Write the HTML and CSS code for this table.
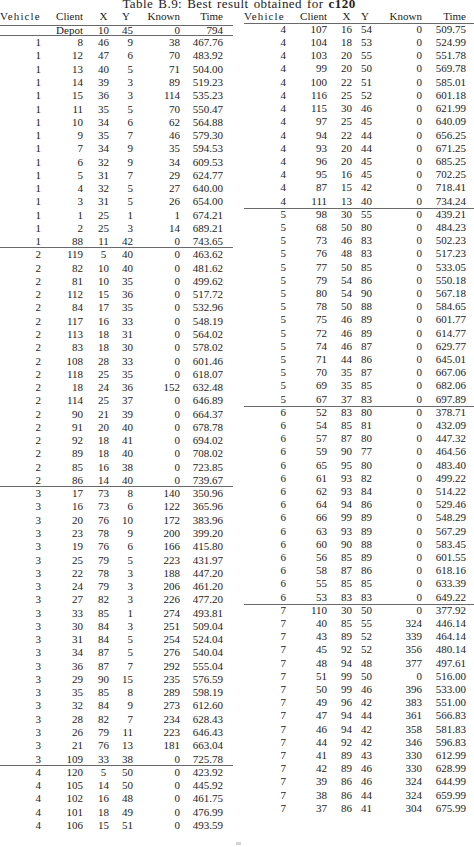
FILE: index.html
```html
<!DOCTYPE html>
<html lang="en">
<head>
<meta charset="utf-8">
<title>Table B.9</title>
<link rel="stylesheet" href="styles.css">
</head>
<body>
<div class="page">
  <div class="caption">Table B.9: Best result obtained for <b>c120</b></div>
  <div class="tables">
    <div class="tbl tbl-l">
      <div class="hd"><span class="hv">Vehicle</span><span>Client</span><span>X</span><span class="hy">Y</span><span>Known</span><span>Time</span></div>
      <div class="r depot"><span></span><span>Depot</span><span>10</span><span>45</span><span>0</span><span>794</span></div>
      <div class="r"><span>1</span><span>8</span><span>46</span><span>9</span><span>38</span><span>467.76</span></div>
      <div class="r"><span>1</span><span>12</span><span>47</span><span>6</span><span>70</span><span>483.92</span></div>
      <div class="r"><span>1</span><span>13</span><span>40</span><span>5</span><span>71</span><span>504.00</span></div>
      <div class="r"><span>1</span><span>14</span><span>39</span><span>3</span><span>89</span><span>519.23</span></div>
      <div class="r"><span>1</span><span>15</span><span>36</span><span>3</span><span>114</span><span>535.23</span></div>
      <div class="r"><span>1</span><span>11</span><span>35</span><span>5</span><span>70</span><span>550.47</span></div>
      <div class="r"><span>1</span><span>10</span><span>34</span><span>6</span><span>62</span><span>564.88</span></div>
      <div class="r"><span>1</span><span>9</span><span>35</span><span>7</span><span>46</span><span>579.30</span></div>
      <div class="r"><span>1</span><span>7</span><span>34</span><span>9</span><span>35</span><span>594.53</span></div>
      <div class="r"><span>1</span><span>6</span><span>32</span><span>9</span><span>34</span><span>609.53</span></div>
      <div class="r"><span>1</span><span>5</span><span>31</span><span>7</span><span>29</span><span>624.77</span></div>
      <div class="r"><span>1</span><span>4</span><span>32</span><span>5</span><span>27</span><span>640.00</span></div>
      <div class="r"><span>1</span><span>3</span><span>31</span><span>5</span><span>26</span><span>654.00</span></div>
      <div class="r"><span>1</span><span>1</span><span>25</span><span>1</span><span>1</span><span>674.21</span></div>
      <div class="r"><span>1</span><span>2</span><span>25</span><span>3</span><span>14</span><span>689.21</span></div>
      <div class="r sep"><span>1</span><span>88</span><span>11</span><span>42</span><span>0</span><span>743.65</span></div>
      <div class="r"><span>2</span><span>119</span><span>5</span><span>40</span><span>0</span><span>463.62</span></div>
      <div class="r"><span>2</span><span>82</span><span>10</span><span>40</span><span>0</span><span>481.62</span></div>
      <div class="r"><span>2</span><span>81</span><span>10</span><span>35</span><span>0</span><span>499.62</span></div>
      <div class="r"><span>2</span><span>112</span><span>15</span><span>36</span><span>0</span><span>517.72</span></div>
      <div class="r"><span>2</span><span>84</span><span>17</span><span>35</span><span>0</span><span>532.96</span></div>
      <div class="r"><span>2</span><span>117</span><span>16</span><span>33</span><span>0</span><span>548.19</span></div>
      <div class="r"><span>2</span><span>113</span><span>18</span><span>31</span><span>0</span><span>564.02</span></div>
      <div class="r"><span>2</span><span>83</span><span>18</span><span>30</span><span>0</span><span>578.02</span></div>
      <div class="r"><span>2</span><span>108</span><span>28</span><span>33</span><span>0</span><span>601.46</span></div>
      <div class="r"><span>2</span><span>118</span><span>25</span><span>35</span><span>0</span><span>618.07</span></div>
      <div class="r"><span>2</span><span>18</span><span>24</span><span>36</span><span>152</span><span>632.48</span></div>
      <div class="r"><span>2</span><span>114</span><span>25</span><span>37</span><span>0</span><span>646.89</span></div>
      <div class="r"><span>2</span><span>90</span><span>21</span><span>39</span><span>0</span><span>664.37</span></div>
      <div class="r"><span>2</span><span>91</span><span>20</span><span>40</span><span>0</span><span>678.78</span></div>
      <div class="r"><span>2</span><span>92</span><span>18</span><span>41</span><span>0</span><span>694.02</span></div>
      <div class="r"><span>2</span><span>89</span><span>18</span><span>40</span><span>0</span><span>708.02</span></div>
      <div class="r"><span>2</span><span>85</span><span>16</span><span>38</span><span>0</span><span>723.85</span></div>
      <div class="r sep"><span>2</span><span>86</span><span>14</span><span>40</span><span>0</span><span>739.67</span></div>
      <div class="r"><span>3</span><span>17</span><span>73</span><span>8</span><span>140</span><span>350.96</span></div>
      <div class="r"><span>3</span><span>16</span><span>73</span><span>6</span><span>122</span><span>365.96</span></div>
      <div class="r"><span>3</span><span>20</span><span>76</span><span>10</span><span>172</span><span>383.96</span></div>
      <div class="r"><span>3</span><span>23</span><span>78</span><span>9</span><span>200</span><span>399.20</span></div>
      <div class="r"><span>3</span><span>19</span><span>76</span><span>6</span><span>166</span><span>415.80</span></div>
      <div class="r"><span>3</span><span>25</span><span>79</span><span>5</span><span>223</span><span>431.97</span></div>
      <div class="r"><span>3</span><span>22</span><span>78</span><span>3</span><span>188</span><span>447.20</span></div>
      <div class="r"><span>3</span><span>24</span><span>79</span><span>3</span><span>206</span><span>461.20</span></div>
      <div class="r"><span>3</span><span>27</span><span>82</span><span>3</span><span>226</span><span>477.20</span></div>
      <div class="r"><span>3</span><span>33</span><span>85</span><span>1</span><span>274</span><span>493.81</span></div>
      <div class="r"><span>3</span><span>30</span><span>84</span><span>3</span><span>251</span><span>509.04</span></div>
      <div class="r"><span>3</span><span>31</span><span>84</span><span>5</span><span>254</span><span>524.04</span></div>
      <div class="r"><span>3</span><span>34</span><span>87</span><span>5</span><span>276</span><span>540.04</span></div>
      <div class="r"><span>3</span><span>36</span><span>87</span><span>7</span><span>292</span><span>555.04</span></div>
      <div class="r"><span>3</span><span>29</span><span>90</span><span>15</span><span>235</span><span>576.59</span></div>
      <div class="r"><span>3</span><span>35</span><span>85</span><span>8</span><span>289</span><span>598.19</span></div>
      <div class="r"><span>3</span><span>32</span><span>84</span><span>9</span><span>273</span><span>612.60</span></div>
      <div class="r"><span>3</span><span>28</span><span>82</span><span>7</span><span>234</span><span>628.43</span></div>
      <div class="r"><span>3</span><span>26</span><span>79</span><span>11</span><span>223</span><span>646.43</span></div>
      <div class="r"><span>3</span><span>21</span><span>76</span><span>13</span><span>181</span><span>663.04</span></div>
      <div class="r sep"><span>3</span><span>109</span><span>33</span><span>38</span><span>0</span><span>725.78</span></div>
      <div class="r"><span>4</span><span>120</span><span>5</span><span>50</span><span>0</span><span>423.92</span></div>
      <div class="r"><span>4</span><span>105</span><span>14</span><span>50</span><span>0</span><span>445.92</span></div>
      <div class="r"><span>4</span><span>102</span><span>16</span><span>48</span><span>0</span><span>461.75</span></div>
      <div class="r"><span>4</span><span>101</span><span>18</span><span>49</span><span>0</span><span>476.99</span></div>
      <div class="r"><span>4</span><span>106</span><span>15</span><span>51</span><span>0</span><span>493.59</span></div>
    </div>
    <div class="tbl tbl-r">
      <div class="hd"><span class="hv">Vehicle</span><span>Client</span><span>X</span><span class="hy">Y</span><span>Known</span><span>Time</span></div>
      <div class="r"><span>4</span><span>107</span><span>16</span><span>54</span><span>0</span><span>509.75</span></div>
      <div class="r"><span>4</span><span>104</span><span>18</span><span>53</span><span>0</span><span>524.99</span></div>
      <div class="r"><span>4</span><span>103</span><span>20</span><span>55</span><span>0</span><span>551.78</span></div>
      <div class="r"><span>4</span><span>99</span><span>20</span><span>50</span><span>0</span><span>569.78</span></div>
      <div class="r"><span>4</span><span>100</span><span>22</span><span>51</span><span>0</span><span>585.01</span></div>
      <div class="r"><span>4</span><span>116</span><span>25</span><span>52</span><span>0</span><span>601.18</span></div>
      <div class="r"><span>4</span><span>115</span><span>30</span><span>46</span><span>0</span><span>621.99</span></div>
      <div class="r"><span>4</span><span>97</span><span>25</span><span>45</span><span>0</span><span>640.09</span></div>
      <div class="r"><span>4</span><span>94</span><span>22</span><span>44</span><span>0</span><span>656.25</span></div>
      <div class="r"><span>4</span><span>93</span><span>20</span><span>44</span><span>0</span><span>671.25</span></div>
      <div class="r"><span>4</span><span>96</span><span>20</span><span>45</span><span>0</span><span>685.25</span></div>
      <div class="r"><span>4</span><span>95</span><span>16</span><span>45</span><span>0</span><span>702.25</span></div>
      <div class="r"><span>4</span><span>87</span><span>15</span><span>42</span><span>0</span><span>718.41</span></div>
      <div class="r sep"><span>4</span><span>111</span><span>13</span><span>40</span><span>0</span><span>734.24</span></div>
      <div class="r"><span>5</span><span>98</span><span>30</span><span>55</span><span>0</span><span>439.21</span></div>
      <div class="r"><span>5</span><span>68</span><span>50</span><span>80</span><span>0</span><span>484.23</span></div>
      <div class="r"><span>5</span><span>73</span><span>46</span><span>83</span><span>0</span><span>502.23</span></div>
      <div class="r"><span>5</span><span>76</span><span>48</span><span>83</span><span>0</span><span>517.23</span></div>
      <div class="r"><span>5</span><span>77</span><span>50</span><span>85</span><span>0</span><span>533.05</span></div>
      <div class="r"><span>5</span><span>79</span><span>54</span><span>86</span><span>0</span><span>550.18</span></div>
      <div class="r"><span>5</span><span>80</span><span>54</span><span>90</span><span>0</span><span>567.18</span></div>
      <div class="r"><span>5</span><span>78</span><span>50</span><span>88</span><span>0</span><span>584.65</span></div>
      <div class="r"><span>5</span><span>75</span><span>46</span><span>89</span><span>0</span><span>601.77</span></div>
      <div class="r"><span>5</span><span>72</span><span>46</span><span>89</span><span>0</span><span>614.77</span></div>
      <div class="r"><span>5</span><span>74</span><span>46</span><span>87</span><span>0</span><span>629.77</span></div>
      <div class="r"><span>5</span><span>71</span><span>44</span><span>86</span><span>0</span><span>645.01</span></div>
      <div class="r"><span>5</span><span>70</span><span>35</span><span>87</span><span>0</span><span>667.06</span></div>
      <div class="r"><span>5</span><span>69</span><span>35</span><span>85</span><span>0</span><span>682.06</span></div>
      <div class="r sep"><span>5</span><span>67</span><span>37</span><span>83</span><span>0</span><span>697.89</span></div>
      <div class="r"><span>6</span><span>52</span><span>83</span><span>80</span><span>0</span><span>378.71</span></div>
      <div class="r"><span>6</span><span>54</span><span>85</span><span>81</span><span>0</span><span>432.09</span></div>
      <div class="r"><span>6</span><span>57</span><span>87</span><span>80</span><span>0</span><span>447.32</span></div>
      <div class="r"><span>6</span><span>59</span><span>90</span><span>77</span><span>0</span><span>464.56</span></div>
      <div class="r"><span>6</span><span>65</span><span>95</span><span>80</span><span>0</span><span>483.40</span></div>
      <div class="r"><span>6</span><span>61</span><span>93</span><span>82</span><span>0</span><span>499.22</span></div>
      <div class="r"><span>6</span><span>62</span><span>93</span><span>84</span><span>0</span><span>514.22</span></div>
      <div class="r"><span>6</span><span>64</span><span>94</span><span>86</span><span>0</span><span>529.46</span></div>
      <div class="r"><span>6</span><span>66</span><span>99</span><span>89</span><span>0</span><span>548.29</span></div>
      <div class="r"><span>6</span><span>63</span><span>93</span><span>89</span><span>0</span><span>567.29</span></div>
      <div class="r"><span>6</span><span>60</span><span>90</span><span>88</span><span>0</span><span>583.45</span></div>
      <div class="r"><span>6</span><span>56</span><span>85</span><span>89</span><span>0</span><span>601.55</span></div>
      <div class="r"><span>6</span><span>58</span><span>87</span><span>86</span><span>0</span><span>618.16</span></div>
      <div class="r"><span>6</span><span>55</span><span>85</span><span>85</span><span>0</span><span>633.39</span></div>
      <div class="r sep"><span>6</span><span>53</span><span>83</span><span>83</span><span>0</span><span>649.22</span></div>
      <div class="r"><span>7</span><span>110</span><span>30</span><span>50</span><span>0</span><span>377.92</span></div>
      <div class="r"><span>7</span><span>40</span><span>85</span><span>55</span><span>324</span><span>446.14</span></div>
      <div class="r"><span>7</span><span>43</span><span>89</span><span>52</span><span>339</span><span>464.14</span></div>
      <div class="r"><span>7</span><span>45</span><span>92</span><span>52</span><span>356</span><span>480.14</span></div>
      <div class="r"><span>7</span><span>48</span><span>94</span><span>48</span><span>377</span><span>497.61</span></div>
      <div class="r"><span>7</span><span>51</span><span>99</span><span>50</span><span>0</span><span>516.00</span></div>
      <div class="r"><span>7</span><span>50</span><span>99</span><span>46</span><span>396</span><span>533.00</span></div>
      <div class="r"><span>7</span><span>49</span><span>96</span><span>42</span><span>383</span><span>551.00</span></div>
      <div class="r"><span>7</span><span>47</span><span>94</span><span>44</span><span>361</span><span>566.83</span></div>
      <div class="r"><span>7</span><span>46</span><span>94</span><span>42</span><span>358</span><span>581.83</span></div>
      <div class="r"><span>7</span><span>44</span><span>92</span><span>42</span><span>346</span><span>596.83</span></div>
      <div class="r"><span>7</span><span>41</span><span>89</span><span>43</span><span>330</span><span>612.99</span></div>
      <div class="r"><span>7</span><span>42</span><span>89</span><span>46</span><span>330</span><span>628.99</span></div>
      <div class="r"><span>7</span><span>39</span><span>86</span><span>46</span><span>324</span><span>644.99</span></div>
      <div class="r"><span>7</span><span>38</span><span>86</span><span>44</span><span>324</span><span>659.99</span></div>
      <div class="r"><span>7</span><span>37</span><span>86</span><span>41</span><span>304</span><span>675.99</span></div>
    </div>
  </div>
  <div class="foot"><span class="pg"></span></div>
</div>
</body>
</html>
```

FILE: styles.css
```css
html, body {
  margin: 0;
  padding: 0;
  background: #ffffff;
}

.page {
  width: 474px;
  height: 847px;
  overflow: hidden;
  font-family: "Liberation Serif", "Times New Roman", serif;
  font-size: 11px;
  color: #1c1c1c;
}

.caption {
  height: 8px;
  padding-bottom: 1.7px;
  padding-left: 4px;
  font-size: 13px;
  line-height: 8px;
  letter-spacing: 0.45px;
  word-spacing: 1.3px;
  text-align: center;
  white-space: nowrap;
}

.caption b {
  font-weight: bold;
}

.tables {
  display: flex;
  align-items: flex-start;
  gap: 11px;
}

.tbl-l {
  --cols: 41px 42px 36px 14px 47px 43px;
  --xpad: 5px;
  width: 233px;
}

.tbl-r {
  --cols: 42px 41px 31px 14px 50px 44px;
  --xpad: 8px;
  width: 230px;
}

.hd,
.r {
  display: grid;
  grid-template-columns: var(--cols);
  white-space: nowrap;
}

.hd span,
.r span {
  text-align: right;
}

.hd span:nth-child(3),
.r span:nth-child(3) {
  text-align: center;
  padding-left: var(--xpad);
}

.hd {
  height: 13.2px;
  line-height: 13.2px;
  border-bottom: 1px solid #6a6a6a;
}

.tbl-l .hd {
  padding-bottom: 2px;
}

.tbl-r .hd {
  padding-bottom: 0;
}

.hd .hv {
  text-align: left;
  letter-spacing: 1.1px;
}

.hd .hy {
  text-align: center;
}

.tbl-l .r {
  height: 13.27px;
  line-height: 13.27px;
}

.tbl-r .r {
  height: 13.21px;
  line-height: 11.2px;
}

.tbl-l .r.depot {
  height: 9.3px;
  line-height: 8.2px;
  border-bottom: 1px solid #6a6a6a;
}

.r.sep {
  box-shadow: inset 0 -1px 0 #6a6a6a;
}

.foot {
  display: flex;
  justify-content: center;
  padding-top: 10px;
}

.pg {
  width: 5px;
  height: 3px;
  margin-left: 2px;
  background: #d4d4d4;
}
```
